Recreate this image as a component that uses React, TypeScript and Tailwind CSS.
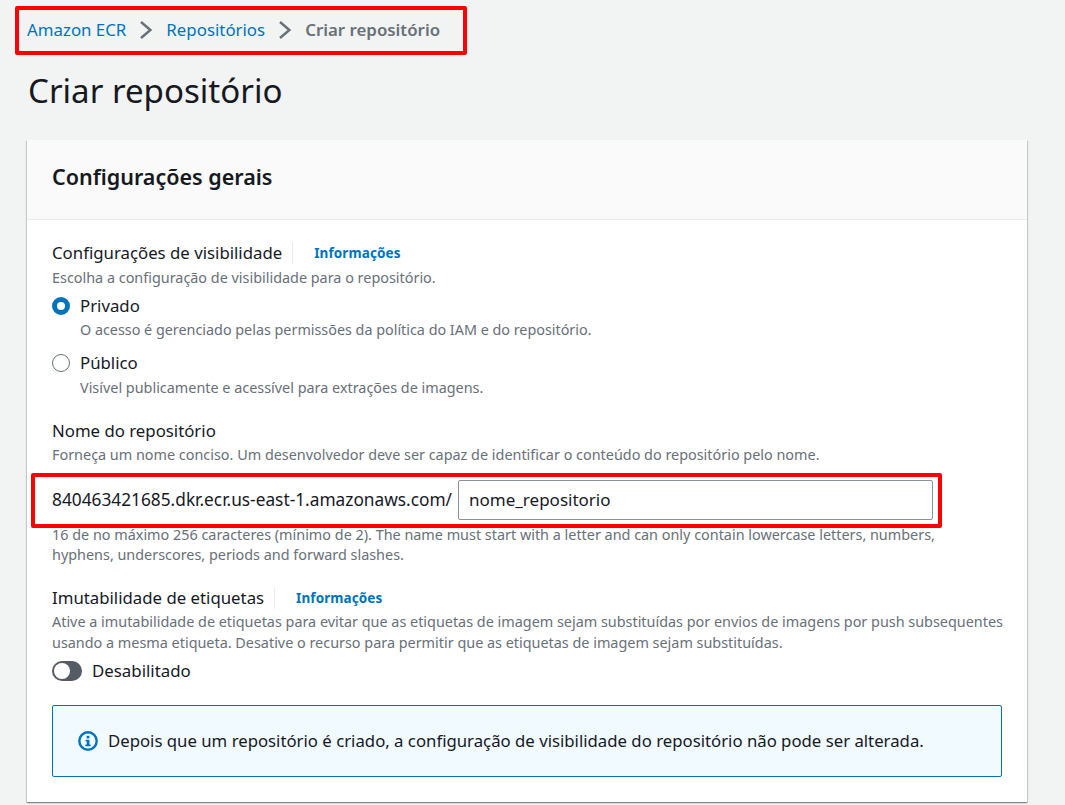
import React from 'react';

const font = { fontFamily: '"Noto Sans", "Open Sans", sans-serif' };

const Chevron = () => (
  <svg width="12" height="18" viewBox="0 0 12 18" fill="none" stroke="#687078" strokeWidth="2.4" className="shrink-0">
    <path d="M1 1 L10.4 9 L1 17" />
  </svg>
);

const Info = () => (
  <span className="flex items-center">
    <span className="w-px h-[22px] bg-[#eaeded]" />
  </span>
);

export default function App() {
  return (
    <div style={font} className="w-[1065px] h-[805px] overflow-hidden bg-[#f2f3f3] relative text-[#16191f]">
      {/* breadcrumb */}
      <div className="flex items-center h-[20px] mt-[20px] ml-[27px] text-[16.85px] leading-[20px]">
        <span className="text-[#0073bb]">Amazon ECR</span>
        <span className="ml-[14px] mr-[14px]"><Chevron /></span>
        <span className="text-[#0073bb]">Repositórios</span>
        <span className="ml-[14px] mr-[14px]"><Chevron /></span>
        <span className="text-[#687078] font-semibold">Criar repositório</span>
      </div>

      <h1 className="mt-[28px] ml-[28px] text-[33.1px] leading-[46px] font-normal">Criar repositório</h1>

      {/* card */}
      <div className="mt-[26px] ml-[27px] w-[1000px] h-[662px] bg-white shadow-[0_1px_1px_0_rgba(0,28,36,0.3),1px_1px_1px_0_rgba(0,28,36,0.15),-1px_1px_1px_0_rgba(0,28,36,0.15)]">
        <div className="h-[80px] bg-[#fafafa] border-b border-[#eaeded] px-[25px] flex items-center">
          <h2 className="text-[21.5px] font-semibold leading-[26px] -mt-[5px]">Configurações gerais</h2>
        </div>

        <div className="px-[25px]">
          <div className="flex items-center h-[24px] mt-[21px] text-[16.8px]">
            <span>Configurações de visibilidade</span>
            <span className="ml-[10px]"><Info /></span>
            <span className="ml-[21px] mt-[1px] text-[13.5px] font-bold text-[#0073bb] tracking-[0.1px]">Informações</span>
          </div>
          <p className="text-[14.4px] leading-[20px] mt-[3px] text-[#687078]">Escolha a configuração de visibilidade para o repositório.</p>

          <div className="flex items-center mt-[7px] h-[22px] gap-[10px]">
            <span className="w-[18px] h-[18px] rounded-full border-[5px] border-[#0073bb] bg-white" />
            <span className="text-[16.8px]">Privado</span>
          </div>
          <p className="ml-[28px] text-[14.35px] leading-[20px] mt-[3px] text-[#687078]">O acesso é gerenciado pelas permissões da política do IAM e do repositório.</p>

          <div className="flex items-center mt-[12px] h-[22px] gap-[10px]">
            <span className="w-[18px] h-[18px] rounded-full border border-[#687078] bg-white" />
            <span className="text-[16.8px]">Público</span>
          </div>
          <p className="ml-[28px] text-[14.4px] leading-[20px] mt-[4px] text-[#687078]">Visível publicamente e acessível para extrações de imagens.</p>

          <p className="text-[16.8px] leading-[24px] mt-[21px]">Nome do repositório</p>
          <p className="text-[14.4px] leading-[20px] mt-[2px] text-[#687078]">Forneça um nome conciso. Um desenvolvedor deve ser capaz de identificar o conteúdo do repositório pelo nome.</p>

          <div className="flex items-center mt-[15px] h-[40px]">
            <span className="text-[17.3px] whitespace-nowrap">840463421685.dkr.ecr.us-east-1.amazonaws.com/</span>
            <div className="ml-[6px] w-[475px] h-[40px] border border-[#879596] rounded-[2px] bg-white flex items-center px-[10px] text-[17px]">nome_repositorio</div>
          </div>

          <p className="text-[14.4px] leading-[20px] mt-[5px] text-[#687078] whitespace-nowrap">
            16 de no máximo 256 caracteres (mínimo de 2). The name must start with a letter and can only contain lowercase letters, numbers,
            <br />
            hyphens, underscores, periods and forward slashes.
          </p>

          <div className="flex items-center h-[24px] mt-[21px] text-[16.8px]">
            <span>Imutabilidade de etiquetas</span>
            <span className="ml-[10px]"><Info /></span>
            <span className="ml-[21px] mt-[1px] text-[13.5px] font-bold text-[#0073bb] tracking-[0.1px]">Informações</span>
          </div>
          <p className="text-[14.4px] leading-[21px] mt-[1px] text-[#687078] whitespace-nowrap">
            Ative a imutabilidade de etiquetas para evitar que as etiquetas de imagem sejam substituídas por envios de imagens por push subsequentes
            <br />
            usando a mesma etiqueta. Desative o recurso para permitir que as etiquetas de imagem sejam substituídas.
          </p>

          <div className="flex items-center mt-[6px] h-[24px]">
            <span className="w-[30px] h-[20px] rounded-full bg-[#545b64] flex items-center pl-[2px]">
              <span className="w-[16px] h-[16px] rounded-full bg-white" />
            </span>
            <span className="ml-[10px] text-[16.85px]">Desabilitado</span>
          </div>

          <div className="mt-[22px] h-[72px] border border-[#0073bb] rounded-[2px] bg-[#f1faff] flex items-center pl-[25px]">
            <svg width="20" height="20" viewBox="0 0 20 20" className="shrink-0">
              <circle cx="10" cy="10" r="8.7" fill="none" stroke="#0073bb" strokeWidth="2.4" />
              <rect x="8.6" y="4.8" width="2.8" height="2.6" fill="#0073bb" />
              <path d="M7.6 8.8h3.8v4.8h1.2v1.6H7.4v-1.6h1.3v-3.2H7.6z" fill="#0073bb" />
            </svg>
            <span className="ml-[10px] text-[16.75px] whitespace-nowrap">Depois que um repositório é criado, a configuração de visibilidade do repositório não pode ser alterada.</span>
          </div>
        </div>
      </div>

      {/* red annotation boxes */}
      <div className="absolute left-[15px] top-[6px] w-[452px] h-[49px] border-4 border-[#ff0000] rounded-[2px]" />
      <div className="absolute left-[31px] top-[473px] w-[911px] h-[55px] border-4 border-[#ff0000] rounded-[2px]" />
    </div>
  );
}
